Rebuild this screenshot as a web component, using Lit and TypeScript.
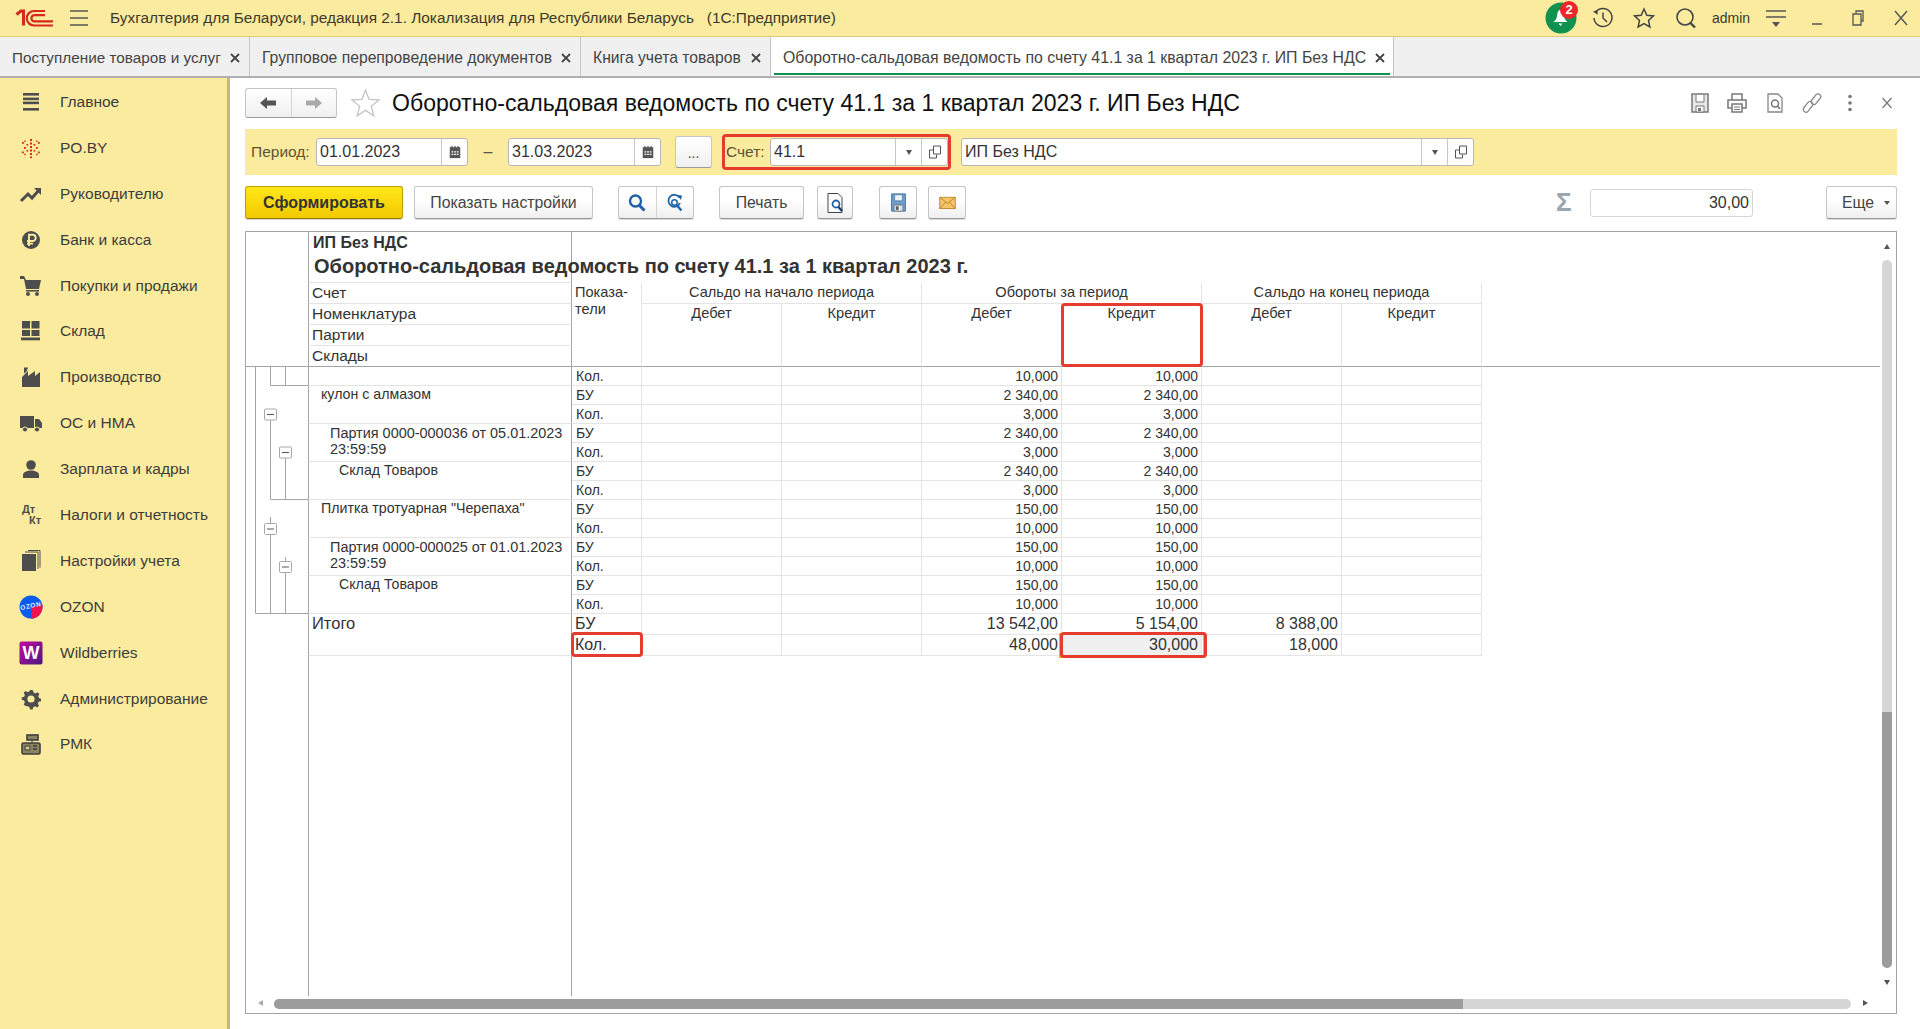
import { LitElement, html, css, svg } from "lit";
import { customElement } from "lit/decorators.js";

const I = "#4d4d4d";
const navIcons: Record<string, any> = {
  main: svg`<rect x="4" y="3" width="16" height="2.6" fill="${I}"/><rect x="4" y="7.6" width="16" height="2.6" fill="${I}"/><rect x="4" y="11.6" width="16" height="2.6" fill="${I}"/><rect x="4" y="18" width="16" height="2.6" fill="${I}"/>`,
  po: svg`<g fill="#d8281e"><rect x="11" y="3" width="2" height="2"/><rect x="11" y="6.5" width="2" height="2"/><rect x="11" y="10" width="2" height="2"/><rect x="11" y="13.5" width="2" height="2"/><rect x="11" y="17" width="2" height="2"/><rect x="11" y="20.5" width="2" height="1.6"/><rect x="7.5" y="8" width="1.6" height="1.6"/><rect x="14.6" y="8" width="1.6" height="1.6"/><rect x="7.5" y="14" width="1.6" height="1.6"/><rect x="14.6" y="14" width="1.6" height="1.6"/><rect x="3" y="6" width="1.8" height="1.8"/><rect x="19" y="6" width="1.8" height="1.8"/><rect x="5" y="11" width="1.8" height="1.8"/><rect x="17" y="11" width="1.8" height="1.8"/><rect x="3" y="15.5" width="1.8" height="1.8"/><rect x="19" y="15.5" width="1.8" height="1.8"/><rect x="5.2" y="4.5" width="1.4" height="1.4"/><rect x="17.2" y="4.5" width="1.4" height="1.4"/><rect x="5.2" y="17.8" width="1.4" height="1.4"/><rect x="17.2" y="17.8" width="1.4" height="1.4"/></g>`,
  chart: svg`<path d="M2 19l7-7 4 4 7-8" fill="none" stroke="${I}" stroke-width="3"/><path d="M15 6h7v7z" fill="${I}"/>`,
  bank: svg`<circle cx="12" cy="12" r="9" fill="${I}"/><path d="M10 18V6.8h3.6a3 3 0 0 1 0 6.2H8M8 15.6h6" fill="none" stroke="#fbeb9e" stroke-width="1.9"/>`,
  cart: svg`<path d="M1 2h4l2 4h15l-2 9H7L5 5H1z" fill="${I}"/><rect x="7" y="16" width="13" height="1.6" fill="${I}"/><circle cx="9" cy="20" r="2" fill="${I}"/><circle cx="18" cy="20" r="2" fill="${I}"/>`,
  wh: svg`<rect x="3" y="2" width="8" height="7.5" fill="${I}"/><rect x="12.5" y="2" width="8" height="7.5" fill="${I}"/><rect x="3" y="11" width="8" height="6" fill="${I}"/><rect x="12.5" y="11" width="8" height="6" fill="${I}"/><rect x="2" y="18.5" width="19" height="2.8" fill="${I}"/>`,
  factory: svg`<path d="M3 22V12l6-6v5l7-5v5l5-4v15z" fill="${I}"/><path d="M5 2.500h4l-1.500 4-2.500 2z" fill="${I}"/>`,
  truck: svg`<path d="M1 5h14v12H1zM16 8h4l3 4v5h-7z" fill="${I}"/><circle cx="6" cy="18.500" r="2.500" fill="${I}" stroke="#fbeb9e"/><circle cx="18" cy="18.500" r="2.500" fill="${I}" stroke="#fbeb9e"/>`,
  user: svg`<circle cx="12" cy="8" r="4.800" fill="${I}"/><path d="M4 21v-3c0-3 4-4.500 8-4.500s8 1.500 8 4.500v3z" fill="${I}"/>`,
  pages: svg`<rect x="3" y="5" width="14" height="17" fill="${I}"/><path d="M6 3h13v17M9 1.500h12v17" fill="none" stroke="${I}" stroke-width="1"/>`,
  gear: svg`<path d="M12 3l2 .4.8 2.600 2 .9 2.400-1.300 2 2-1.300 2.400.9 2 2.200.9v2.600l-2.600.8-.9 2 1.300 2.400-2 1.800-2.400-1.200-2 .9-.8 2.600H11l-.8-2.600-2-.9L5.800 21l-2-1.800 1.300-2.400-.9-2L1.600 14v-2.600l2.600-.8.9-2L3.800 6.200l2-2 2.400 1.300 2-.9L11 3z" transform="translate(1.300 0.200) scale(.9)" fill="${I}"/><circle cx="12" cy="12" r="3.600" fill="#fbeb9e"/>`,
  rmk: svg`<rect x="3" y="11" width="18" height="11" rx="1.500" fill="#8a8460" stroke="#3f3f3f" stroke-width="1.600"/><rect x="8" y="3" width="11" height="5" fill="#8a8460" stroke="#3f3f3f" stroke-width="1.600"/><path d="M13 8v3M6 14h5v4H6z" stroke="#3f3f3f" fill="#c9c08c"/><path d="M14 14h4M14 17h4" stroke="#3f3f3f" stroke-width="1.500"/>`,
  ozon: svg`<defs><clipPath id="ocl"><circle cx="12" cy="12" r="11.500"/></clipPath></defs><circle cx="12" cy="12" r="11.500" fill="#0a5bf0"/><path d="M12 24V12.500L24 9.500V24z" fill="#f0114f" clip-path="url(#ocl)"/><text x="12" y="13" font-size="6.500" font-weight="700" fill="#dfe8ff" text-anchor="middle" font-family="Liberation Sans" transform="rotate(-12 12 12)" letter-spacing=".6">OZON</text>`,
  wb: svg`<defs><linearGradient id="wbg" x1="0" y1="0" x2="1" y2="1"><stop offset="0" stop-color="#c40aa0"/><stop offset="1" stop-color="#47197f"/></linearGradient></defs><rect x=".5" y=".5" width="23" height="23" rx="2" fill="url(#wbg)"/><text x="12" y="18" font-size="18" font-weight="700" fill="#fff" text-anchor="middle" font-family="Liberation Sans">W</text>`,
};

const navItems: [string, string][] = [
  ["main", "Главное"], ["po", "PO.BY"], ["chart", "Руководителю"], ["bank", "Банк и касса"],
  ["cart", "Покупки и продажи"], ["wh", "Склад"], ["factory", "Производство"], ["truck", "ОС и НМА"],
  ["user", "Зарплата и кадры"], ["dtkt", "Налоги и отчетность"], ["pages", "Настройки учета"],
  ["ozon", "OZON"], ["wb", "Wildberries"], ["gear", "Администрирование"], ["rmk", "РМК"],
];

type Row = { label?: string; cls?: string; ind: string; d?: string; k?: string };
const rows: Row[] = [
  { label: "", cls: "", ind: "Кол.", d: "10,000", k: "10,000" },
  { label: "кулон с алмазом", cls: "l1", ind: "БУ", d: "2 340,00", k: "2 340,00" },
  { ind: "Кол.", d: "3,000", k: "3,000" },
  { label: "Партия 0000-000036 от 05.01.2023 23:59:59", cls: "l2", ind: "БУ", d: "2 340,00", k: "2 340,00" },
  { ind: "Кол.", d: "3,000", k: "3,000" },
  { label: "Склад Товаров", cls: "l3", ind: "БУ", d: "2 340,00", k: "2 340,00" },
  { ind: "Кол.", d: "3,000", k: "3,000" },
  { label: 'Плитка тротуарная "Черепаха"', cls: "l1", ind: "БУ", d: "150,00", k: "150,00" },
  { ind: "Кол.", d: "10,000", k: "10,000" },
  { label: "Партия 0000-000025 от 01.01.2023 23:59:59", cls: "l2", ind: "БУ", d: "150,00", k: "150,00" },
  { ind: "Кол.", d: "10,000", k: "10,000" },
  { label: "Склад Товаров", cls: "l3", ind: "БУ", d: "150,00", k: "150,00" },
  { ind: "Кол.", d: "10,000", k: "10,000" },
];

const box = (x: number, y: number) => svg`<rect x="${x - 6}" y="${y - 5.5}" width="12" height="11" rx="1" fill="#fff" stroke="#a8a8a8"/><path d="M${x - 3.500} ${y}h7" stroke="#555"/>`;

const calIcon = html`<svg class="i12" viewBox="0 0 14 16"><path d="M1 2.500h12v12.500H1z" fill="#555"/><path d="M3.500 1v3M7 1v3M10.500 1v3" stroke="#555" stroke-width="1.400"/><path d="M3 7h2v1.500H3zM6 7h2v1.500H6zM9 7h2v1.500H9zM3 10h2v1.500H3zM6 10h2v1.500H6zM9 10h2v1.500H9z" fill="#fff"/></svg>`;
const copyIcon = html`<svg class="i12" viewBox="0 0 14 14"><path d="M5.500 1h7v8h-7zM5.500 5H1.500v8h7V9.500" fill="none" stroke="#555"/></svg>`;
const tri = html`<span class="tri"></span>`;

@customElement("app-root")
export class AppRoot extends LitElement {
  static styles = css`
    :host { display: block; width: 1920px; height: 1029px; overflow: hidden; font-family: "Liberation Sans", Arial, sans-serif; color: #333; background: #fff; }
    * { box-sizing: border-box; }
    svg { display: block; flex: none; }
    .titlebar { height: 37px; background: #fbeb9e; border-bottom: 1px solid #dccb7e; display: flex; align-items: center; }
    .logo { width: 38px; height: 18px; margin-left: 15px; }
    .burger { width: 18px; height: 16px; margin-left: 17px; }
    .apptitle { margin-left: 22px; font-size: 15.400px; color: #3e3a2a; white-space: pre; flex: 1; }
    .tb-ic { width: 22px; height: 22px; }
    .bell { position: relative; width: 32px; height: 32px; margin-right: 15.500px; }
    .badge { position: absolute; left: 15.500px; top: -1.500px; width: 18px; height: 18px; border-radius: 50%; background: #f0252b; color: #fff; font-weight: 700; font-size: 13px; text-align: center; line-height: 18px; }
    .tb-ic.h { margin-right: 19px; }
    .tb-ic.st { margin-right: 20px; }
    .tb-ic.se { margin-right: 15px; }
    .admin { font-size: 14px; width: 38px; white-space: nowrap; color: #3e3a2a; margin-right: 15px; }
    .tb-ic.m { margin-right: 19px; }
    .tb-ic.mi { margin-right: 19px; }
    .tb-ic.re { margin-right: 21px; }
    .tb-ic.x { margin-right: 8px; }

    .tabs { height: 41px; background: #f0f0f0; border-bottom: 2px solid #b0b0b0; display: flex; }
    .tab { height: 39px; display: flex; align-items: center; justify-content: space-between; border-right: 1px solid #c6c6c6; padding: 2px 9px 0 12px; font-size: 15.700px; color: #444; white-space: nowrap; }
    .t1 { width: 250px; font-size: 15.300px; } .t2 { width: 331px; } .t3 { width: 190px; } .t4 { width: 623px; font-size: 15.870px; padding-right: 8px; }
    .tab.active { background: #fff; position: relative; }
    .tab.active::after { content: ""; position: absolute; left: 3px; right: 3px; bottom: 1px; height: 2px; background: #0f9150; }
    .tab .c { width: 10px; height: 10px; }

    .body { display: flex; height: 951px; }
    aside { width: 230px; background: #fbeb9e; border-right: 3px solid #c4b97c; padding-top: 1px; }
    .nav { height: 45.900px; display: flex; align-items: center; padding-left: 19px; font-size: 15.500px; color: #3d3d3d; }
    .nav svg { width: 24px; height: 24px; }
    .nav span.t { margin-left: 17px; white-space: nowrap; }
    .dtkt { width: 24px; height: 24px; font-size: 11px; font-weight: 700; color: #4d4d4d; line-height: 11px; flex: none; padding: 1px 0 0 3px; }
    .dtkt b { display: block; } .dtkt b + b { padding-left: 7px; }

    main { width: 1690px; padding: 10px 23px 0 15px; display: flex; flex-direction: column; }
    .fhead { height: 30px; display: flex; align-items: center; }
    .navg { width: 92px; height: 30px; display: flex; border: 1px solid #c4c4c4; border-bottom-color: #9a9a9a; border-radius: 3px; background: linear-gradient(#fff, #f0f0f0); }
    .navg div { flex: 1; display: flex; align-items: center; justify-content: center; }
    .navg div + div { border-left: 1px solid #d4d4d4; }
    .navg svg { width: 18px; height: 14px; }
    .fstar { width: 31px; height: 30px; margin-left: 13px; }
    h1 { margin: 0 0 0 11px; font-size: 23.070px; font-weight: 400; color: #111; white-space: nowrap; flex: 1; }
    .ficons { display: flex; gap: 17.500px; }
    .ficons svg { width: 20px; height: 20px; }

    .filter { margin-top: 11px; height: 46px; background: #fbeb9e; display: flex; align-items: center; padding-left: 6px; font-size: 16px; }
    .lbl { color: #5b5535; font-size: 15.500px; white-space: nowrap; }
    .lp { width: 65px; }
    .field { height: 28px; background: #fff; border: 1px solid #b6b6b6; border-radius: 3px; display: flex; align-items: stretch; font-size: 16px; color: #333; }
    .field .v { flex: 1; padding-left: 3px; line-height: 26px; }
    .field .b { display: flex; align-items: center; justify-content: center; border-left: 1px solid #c8c8c8; }
    .d1 { width: 152px; } .d2 { width: 153px; }
    .field .bc { width: 26px; }
    .dash { width: 40px; text-align: center; color: #555; }
    .i12 { width: 14px; height: 14px; }
    .tri { width: 0; height: 0; border-left: 3px solid transparent; border-right: 3px solid transparent; border-top: 5px solid #555; }
    .dots { width: 37px; height: 32px; margin-left: 14px; border: 1px solid #c8c8c8; border-bottom-color: #9a9a9a; border-radius: 3px; background: linear-gradient(#fff, #f0f0f0); text-align: center; font-size: 14px; line-height: 32px; color: #444; }
    .acc { position: relative; margin-left: 10px; display: flex; align-items: center; padding-left: 4px; width: 229px; }
    .acc .lbl { width: 44px; }
    .acc .field { width: 178px; }
    .field .b25 { width: 26px; }
    .redbox { position: absolute; border: 3px solid #e63c2f; border-radius: 4px; pointer-events: none; }
    .r0 { left: 0; top: -4px; width: 229px; height: 36px; }
    .org { width: 513px; margin-left: 10px; }

    .toolbar { margin-top: 11px; height: 33px; display: flex; align-items: stretch; }
    .btn { border: 1px solid #c6c6c6; border-bottom-color: #9a9a9a; border-radius: 3px; background: linear-gradient(#fff 40%, #efefef); font-size: 15.800px; color: #444; display: flex; align-items: center; justify-content: center; white-space: nowrap; box-shadow: 0 1px 0 #d8d8d8; }
    .primary { width: 158px; font-size: 16px; background: linear-gradient(#ffe71a, #f3c900); border-color: #bda000; border-bottom-color: #8d7a00; font-weight: 700; color: #333; }
    .settings { width: 179px; margin-left: 11px; }
    .grp { width: 76px; margin-left: 25px; }
    .grp div { flex: 1; height: 100%; display: flex; align-items: center; justify-content: center; }
    .grp div + div { border-left: 1px solid #d4d4d4; }
    .print { width: 85px; margin-left: 25px; }
    .prev { width: 36px; margin-left: 13px; }
    .save { width: 38px; margin-left: 26px; }
    .mail { width: 38px; margin-left: 11px; }
    .btn svg { width: 22px; height: 22px; }
    .btn.save svg, .btn.mail svg { width: 19px; height: 19px; }
    .sigma { margin-left: auto; width: 34px; font-size: 26px; font-weight: 700; color: #9aa6ae; line-height: 33px; }
    .sum { width: 163px; height: 28px; align-self: center; border: 1px solid #d6d6d6; border-radius: 3px; text-align: right; padding-right: 3px; font-size: 16px; line-height: 26px; color: #333; }
    .more { width: 71px; margin-left: 73px; justify-content: flex-start; padding-left: 15px; }
    .more .tri { margin-left: 10px; border-top-width: 4px; }

    .report { margin-top: 12px; height: 783px; border: 1px solid #a4a4a4; position: relative; overflow: hidden; }
    .grid { display: grid; grid-template-columns: 62px 264px 70px repeat(6, 140px) 398px; grid-template-rows: 51px repeat(4, 21px) repeat(13, 19px) 21px 21px 340px; font-size: 14px; color: #333; }
    .grid > div { min-width: 0; white-space: nowrap; }
    .line { border-right: 1px solid #e4e4e4; border-bottom: 1px solid #e4e4e4; }
    .gb { border-bottom-color: #a4a4a4 !important; }
    .hbot { border-bottom: 1px solid #a4a4a4; }
    .corner { grid-column: 1; grid-row: span 5; }
    .lab { grid-column: 2; border-left: 1px solid #a4a4a4; border-right: 1px solid #a4a4a4; border-bottom: 1px solid #e4e4e4; padding-left: 3px; font-size: 14.200px; }
    .head { border-bottom-color: #e4e4e4; }
    .lab.h { font-size: 15.500px; line-height: 19px; }
    .titlecell { padding: 1px 0 0 4px; }
    .org-t { font-size: 16px; font-weight: 700; line-height: 19px; }
    .rep-t { font-size: 20px; font-weight: 700; line-height: 28px; padding-left: 1px; }
    .rest { grid-column: 3 / span 8; }
    .ind-h { grid-column: 3; grid-row: span 4; white-space: normal !important; padding: 1px 3px; font-size: 14.600px; line-height: 16.500px; border-left: 0; border-right: 1px solid #e4e4e4; }
    .c { text-align: center; font-size: 14.600px; line-height: 19px; }
    .s2 { grid-column: span 2; }
    .r3 { grid-row: span 3; }
    .spacer { grid-column: 10; grid-row: span 4; }
    .tree { grid-column: 1; grid-row: span 13; }
    .tree svg { width: 62px; height: 247px; }
    .grid > .lab.wrap { white-space: normal; line-height: 16px; padding-top: 1px; font-size: 14.450px; }
    .sp2 { grid-row: span 2; }
    .l1 { padding-left: 12px; } .l2 { padding-left: 21px; padding-right: 4px; } .l3 { padding-left: 30px; }
    .ind { grid-column: 3; padding-left: 4px; line-height: 18px; }
    .n { text-align: right; padding-right: 3px; line-height: 18px; }
    .tot { font-size: 16px; line-height: 20px; }
    .ind.tot { padding-left: 3px; }
    .lab.h.tot { font-size: 16.500px; }
    .selc { background: #efefef; }
    .blank { grid-column: 1; }
    .filler { grid-column: 2; border-left: 1px solid #a4a4a4; border-right: 1px solid #a4a4a4; }

    .sel { position: absolute; left: 813px; top: 401px; width: 146px; height: 25px; border: 2px solid #f5b800; }
    .r1 { left: 815px; top: 71px; width: 142px; height: 64px; }
    .r2 { left: 325px; top: 400px; width: 72px; height: 25px; }
    .r3b { left: 814px; top: 400px; width: 147px; height: 26px; }
    .vbar { position: absolute; left: 1636px; top: 28px; width: 10px; height: 708px; border-radius: 5px; background: #d6d6d6; overflow: hidden; }
    .vbar i { position: absolute; left: 0; right: 0; top: 452px; bottom: 0; background: #9c9c9c; }
    .hbar { position: absolute; left: 28px; top: 767px; width: 1577px; height: 10px; border-radius: 5px; background: #d6d6d6; overflow: hidden; }
    .hbar i { position: absolute; left: 0; top: 0; bottom: 0; width: 1189px; background: #9c9c9c; }
    .ar { position: absolute; width: 0; height: 0; }
    .up { left: 1638px; top: 12px; border: 3.500px solid transparent; border-top: 0; border-bottom: 5px solid #555; }
    .down { left: 1638px; top: 748px; border: 3.500px solid transparent; border-bottom: 0; border-top: 5px solid #555; }
    .left { left: 12px; top: 768px; border: 3.500px solid transparent; border-left: 0; border-right: 5px solid #aaa; }
    .right { left: 1617px; top: 768px; border: 3.500px solid transparent; border-right: 0; border-left: 5px solid #555; }
  `;

  private closeX() {
    return html`<svg class="c" viewBox="0 0 10 10"><path d="M1 1l8 8M9 1l-8 8" stroke="#444" stroke-width="1.800"/></svg>`;
  }

  private dataRow(r: Row) {
    return html`
      ${r.label !== undefined
        ? html`<div class="lab ${r.cls} ${r.label ? "sp2" : ""} ${r.cls === "l2" ? "wrap" : ""}">${r.label}</div>`
        : ""}
      <div class="line ind">${r.ind}</div>
      <div class="line"></div><div class="line"></div>
      <div class="line n">${r.d}</div><div class="line n">${r.k}</div>
      <div class="line"></div><div class="line"></div>`;
  }

  render() {
    const gray = "#a4a4a4";
    return html`
      <header class="titlebar">
        <svg class="logo" viewBox="0 0 38 18"><g fill="none" stroke="#d6281e"><path d="M1.500 5.500L6 2h2.500v14.500" stroke-width="3"/><path d="M30 2H19a7 7 0 0 0 0 14.500H38" stroke-width="2.200"/><path d="M30 6.200H19.500a3 3 0 0 0 0 6.200H38" stroke-width="2.200"/></g></svg>
        <svg class="burger" viewBox="0 0 18 16"><path d="M0 1h18M0 8h18M0 15h18" stroke="#555" stroke-width="1.500"/></svg>
        <div class="apptitle">Бухгалтерия для Беларуси, редакция 2.1. Локализация для Республики Беларусь   (1С:Предприятие)</div>
        <div class="bell">
          <svg viewBox="0 0 32 32"><circle cx="16" cy="16" r="15.500" fill="#0f9150"/><path d="M15.500 8c-2 0-3 2-3.200 4.500-.3 3-1.300 5.500-3.800 7.500h14c-2.500-2-3.500-4.500-3.800-7.500C18.500 10 17.500 8 15.500 8zM13.500 21.500h4L15.500 24z" fill="#fff"/></svg>
          <span class="badge">2</span>
        </div>
        <svg class="tb-ic h" viewBox="0 0 22 22"><path d="M3.500 5.500A9 9 0 1 1 2 11" fill="none" stroke="#444" stroke-width="1.500"/><path d="M.8 4.500l4.700-1.300.2 4.500z" fill="#444"/><path d="M11 5.500V11l4 4" fill="none" stroke="#444" stroke-width="1.500"/></svg>
        <svg class="tb-ic st" viewBox="0 0 22 22"><path d="M11 2l2.800 6.200 6.700.7-5 4.500 1.400 6.600L11 16.600 5.100 20l1.400-6.600-5-4.500 6.700-.7z" fill="none" stroke="#444" stroke-width="1.500"/></svg>
        <svg class="tb-ic se" viewBox="0 0 22 22"><circle cx="10" cy="10" r="8" fill="none" stroke="#444" stroke-width="1.600"/><path d="M15.500 16l4.500 4.500" stroke="#444" stroke-width="2.400"/></svg>
        <span class="admin">admin</span>
        <svg class="tb-ic m" viewBox="0 0 22 22"><path d="M1 4h20M1 10h20" stroke="#555" stroke-width="1.500"/><path d="M7 15h8l-4 5z" fill="#555"/></svg>
        <svg class="tb-ic mi" viewBox="0 0 22 22"><path d="M6 17h10" stroke="#555" stroke-width="1.500"/></svg>
        <svg class="tb-ic re" viewBox="0 0 22 22"><path d="M9 6V4h7v10h-2M6 7h8v11H6z" fill="none" stroke="#555" stroke-width="1.300"/></svg>
        <svg class="tb-ic x" viewBox="0 0 22 22"><path d="M5 4l12 14M17 4L5 18" stroke="#555" stroke-width="1.400"/></svg>
      </header>

      <nav class="tabs">
        <div class="tab t1">Поступление товаров и услуг ${this.closeX()}</div>
        <div class="tab t2">Групповое перепроведение документов ${this.closeX()}</div>
        <div class="tab t3">Книга учета товаров ${this.closeX()}</div>
        <div class="tab t4 active">Оборотно-сальдовая ведомость по счету 41.1 за 1 квартал 2023 г. ИП Без НДС ${this.closeX()}</div>
      </nav>

      <div class="body">
        <aside>
          ${navItems.map(([k, t]) => html`<div class="nav">
            ${k === "dtkt"
              ? html`<div class="dtkt"><b>Дт</b><b>Кт</b></div>`
              : html`<svg viewBox="0 0 24 24">${navIcons[k]}</svg>`}
            <span class="t">${t}</span>
          </div>`)}
        </aside>

        <main>
          <div class="fhead">
            <div class="navg">
              <div><svg viewBox="0 0 18 14"><path d="M8 1L1 7l7 6V9.500h9v-5H8z" fill="#555"/></svg></div>
              <div><svg viewBox="0 0 18 14"><path d="M10 1l7 6-7 6V9.500H1v-5h9z" fill="#aaa"/></svg></div>
            </div>
            <svg class="fstar" viewBox="0 0 31 30"><path d="M15.500 2l3.600 9.300 9.900.6-7.700 6.300 2.500 9.600-8.300-5.400-8.300 5.400 2.500-9.600L2 11.900l9.900-.6z" fill="#fff" stroke="#c4c4c4" stroke-width="1.300"/></svg>
            <h1>Оборотно-сальдовая ведомость по счету 41.1 за 1 квартал 2023 г. ИП Без НДС</h1>
            <div class="ficons">
              <svg viewBox="0 0 20 20"><path d="M2 1h16v18H2z" fill="#e8e8e8" stroke="#777" stroke-width="1.500"/><path d="M6 2v7h8V2M6 13h8v6H6z" fill="#fff" stroke="#777"/><rect x="8" y="15" width="3" height="3" fill="#777"/></svg>
              <svg viewBox="0 0 20 20"><path d="M5 7V1h10v6M5 15H1V7h18v8h-4" fill="none" stroke="#777" stroke-width="1.500"/><path d="M5 11h10v8H5z" fill="#fff" stroke="#777" stroke-width="1.500"/><path d="M7 14h6M7 16.500h6" stroke="#777"/></svg>
              <svg viewBox="0 0 20 20"><path d="M13 1H3v18h14V5z" fill="none" stroke="#888" stroke-width="1.300"/><circle cx="10" cy="10.500" r="3.500" fill="none" stroke="#777" stroke-width="1.500"/><path d="M12.500 13l2.500 3" stroke="#777" stroke-width="1.600"/></svg>
              <svg viewBox="0 0 20 20"><g fill="none" stroke="#888" stroke-width="1.300"><rect x="8" y="-1.500" width="5.500" height="12" rx="2.750" transform="rotate(38 10 10)"/><rect x="6.500" y="9.500" width="5.500" height="12" rx="2.750" transform="rotate(38 10 10)"/></g></svg>
              <svg viewBox="0 0 20 20"><circle cx="10" cy="3.500" r="1.800" fill="#777"/><circle cx="10" cy="10" r="1.800" fill="#777"/><circle cx="10" cy="16.500" r="1.800" fill="#777"/></svg>
              <svg viewBox="0 0 20 20"><path d="M5.500 5l9 10M14.500 5l-9 10" stroke="#777" stroke-width="1.200"/></svg>
            </div>
          </div>

          <div class="filter">
            <span class="lbl lp">Период:</span>
            <div class="field d1"><span class="v">01.01.2023</span><span class="b bc">${calIcon}</span></div>
            <span class="dash">–</span>
            <div class="field d2"><span class="v">31.03.2023</span><span class="b bc">${calIcon}</span></div>
            <div class="dots">...</div>
            <div class="acc">
              <span class="lbl">Счет:</span>
              <div class="field"><span class="v">41.1</span><span class="b b25">${tri}</span><span class="b b25">${copyIcon}</span></div>
              <div class="redbox r0"></div>
            </div>
            <div class="field org"><span class="v">ИП Без НДС</span><span class="b b25">${tri}</span><span class="b b25">${copyIcon}</span></div>
          </div>

          <div class="toolbar">
            <div class="btn primary">Сформировать</div>
            <div class="btn settings">Показать настройки</div>
            <div class="btn grp">
              <div><svg viewBox="0 0 22 22"><circle cx="9.500" cy="9" r="5.500" fill="none" stroke="#1d62a8" stroke-width="2.400"/><path d="M13.500 13.500l5 5" stroke="#1d62a8" stroke-width="3"/></svg></div>
              <div><svg viewBox="0 0 22 22"><path d="M15.500 5.500A6 6 0 1 0 16 11" fill="none" stroke="#1d62a8" stroke-width="1.800"/><path d="M13 3l5 .5-1 4.500z" fill="#1d62a8"/><circle cx="10.500" cy="10.500" r="2.800" fill="none" stroke="#1d62a8" stroke-width="1.500"/><path d="M13 13.500l4.500 5" stroke="#1d62a8" stroke-width="2.400"/></svg></div>
            </div>
            <div class="btn print">Печать</div>
            <div class="btn prev"><svg viewBox="0 0 22 22"><path d="M4 1.500h10l4 4v15H4z" fill="#fff" stroke="#444"/><circle cx="12" cy="12" r="3.500" fill="none" stroke="#1d62a8" stroke-width="1.800"/><path d="M14.500 15l3.500 4" stroke="#123f72" stroke-width="2.400"/></svg></div>
            <div class="btn save"><svg viewBox="0 0 22 22"><path d="M3 1h16v20H3z" fill="#6d9dc9" stroke="#3f6d99"/><path d="M6.500 2h9v7h-9z" fill="#eef3f8" stroke="#3f6d99" stroke-width=".7"/><path d="M6 14h10v7H6z" fill="#e2e2e2" stroke="#666" stroke-width=".7"/><rect x="8" y="15.500" width="3" height="4" fill="#555"/></svg></div>
            <div class="btn mail"><svg viewBox="0 0 22 22"><path d="M2 5h18v13H2z" fill="#f4c36a" stroke="#b9801f"/><path d="M2 5l9 7 9-7M2 18l7-7.500M20 18l-7-7.500" fill="none" stroke="#b9801f"/></svg></div>
            <div class="sigma">Σ</div>
            <div class="sum">30,00</div>
            <div class="btn more">Еще ${tri}</div>
          </div>

          <section class="report">
            <div class="grid">
              <div class="corner hbot"></div>
              <div class="lab titlecell"><div class="org-t">ИП Без НДС</div><div class="rep-t">Оборотно-сальдовая ведомость по счету 41.1 за 1 квартал 2023 г.</div></div>
              <div class="rest"></div>

              <div class="lab h head">Счет</div>
              <div class="ind-h gb hbot line">Показа-<br />тели</div>
              <div class="c line s2">Сальдо на начало периода</div>
              <div class="c line s2">Обороты за период</div>
              <div class="c line s2">Сальдо на конец периода</div>
              <div class="spacer hbot"></div>
              <div class="lab h head">Номенклатура</div>
              ${["Дебет", "Кредит", "Дебет", "Кредит", "Дебет", "Кредит"].map((t) => html`<div class="c line r3 gb">${t}</div>`)}
              <div class="lab h head">Партии</div>
              <div class="lab h head gb">Склады</div>

              <div class="tree">
                <svg viewBox="0 0 62 247">
                  <g fill="none" stroke="${gray}">
                    <path d="M9.500 0V246.500H62"/>
                    <path d="M24.500 0V18.500H62M39.500 0V18.500"/>
                    <path d="M24.500 44V132.500H62"/>
                    <path d="M39.500 80V132.500"/>
                    <path d="M24.500 150V246.500"/>
                    <path d="M39.500 190V246.500"/>
                  </g>
                  ${box(24.5, 47.5)}${box(39.5, 85.5)}${box(24.5, 162)}${box(39.5, 200)}
                </svg>
              </div>
              ${rows.map((r) => this.dataRow(r))}

              <div class="blank sp2"></div>
              <div class="lab h sp2 tot">Итого</div>
              <div class="line ind tot">БУ</div>
              <div class="line"></div><div class="line"></div>
              <div class="line n tot">13 542,00</div><div class="line n tot">5 154,00</div>
              <div class="line n tot">8 388,00</div><div class="line"></div>
              <div class="line ind tot">Кол.</div>
              <div class="line"></div><div class="line"></div>
              <div class="line n tot">48,000</div><div class="line n tot selc">30,000</div>
              <div class="line n tot">18,000</div><div class="line"></div>

              <div class="blank"></div>
              <div class="filler"></div>
            </div>

            <div class="sel"></div>
            <div class="redbox r1"></div>
            <div class="redbox r2"></div>
            <div class="redbox r3b"></div>
            <div class="vbar"><i></i></div>
            <div class="hbar"><i></i></div>
            <span class="ar up"></span><span class="ar down"></span><span class="ar left"></span><span class="ar right"></span>
          </section>
        </main>
      </div>
    `;
  }
}
